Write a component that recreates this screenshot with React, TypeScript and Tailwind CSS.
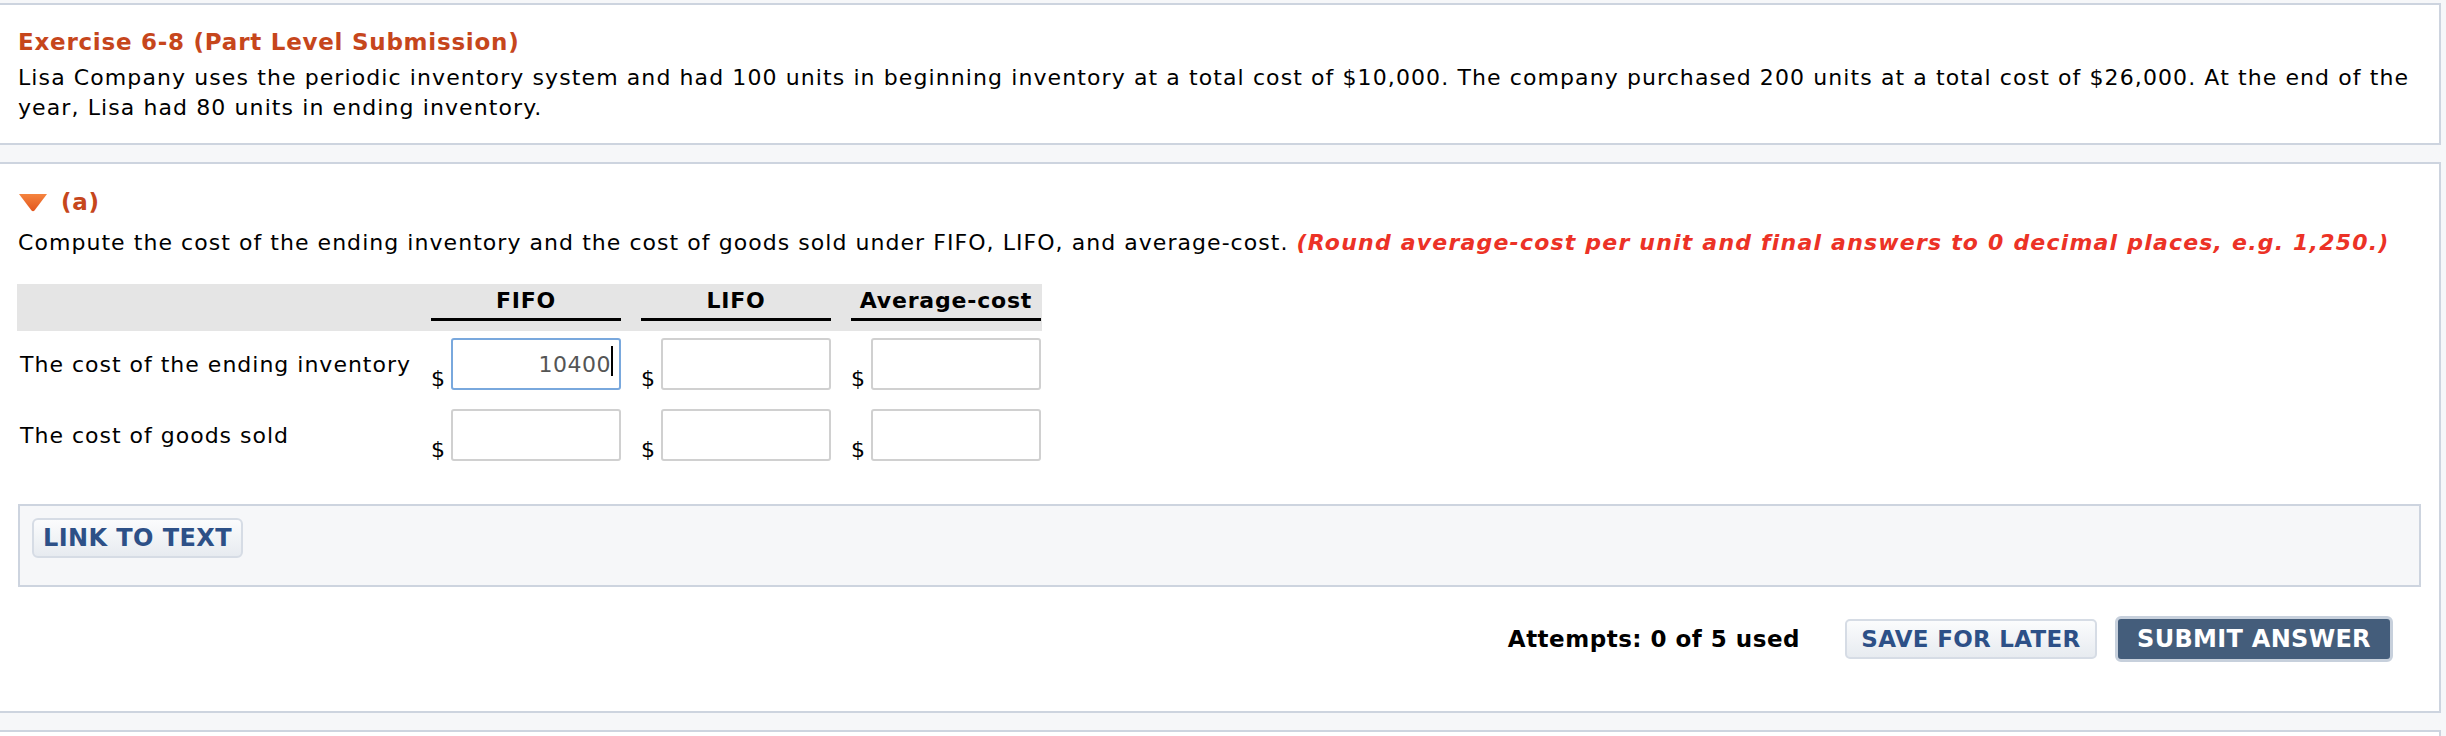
export default function App() {
  const rows = ["The cost of the ending inventory", "The cost of goods sold"];
  const cols = ["FIFO", "LIFO", "Average-cost"];

  return (
    <div className="h-[736px] overflow-hidden bg-[#f6f7f9] pt-[3px] font-['DejaVu_Sans',Verdana,sans-serif] text-[22px] tracking-[1px] text-black">
      {/* problem statement */}
      <div className="mr-[5px] h-[142px] border-y-2 border-r-2 border-[#cdd4df] bg-white pl-[18px] pt-[22px]">
        <h1 className="text-[23px] font-bold leading-[30px] tracking-[0.75px] text-[#c6461c]">
          Exercise 6-8 (Part Level Submission)
        </h1>
        <p className="mt-[6px] leading-[30px] tracking-[1.1px]">
          Lisa Company uses the periodic inventory system and had 100 units in beginning inventory at a total cost of
          $10,000. The company purchased 200 units at a total cost of $26,000. At the end of the year, Lisa had 80 units
          in ending inventory.
        </p>
      </div>

      {/* part (a) */}
      <div className="mr-[5px] mt-[17px] h-[551px] border-y-2 border-r-2 border-[#cdd4df] bg-white">
        <div className="flex items-center gap-[13px] pl-[18px] pt-[24px]">
          <svg width="30" height="20" viewBox="0 0 30 20">
            <defs>
              <linearGradient id="tri" x1="0" y1="0" x2="0" y2="1">
                <stop offset="0" stopColor="#f5843f" />
                <stop offset="1" stopColor="#e2561d" />
              </linearGradient>
            </defs>
            <path d="M1 2 H29 L16.5 18.5 Q15 20 13.5 18.5 Z" fill="url(#tri)" />
          </svg>
          <span className="text-[23px] font-bold leading-[28px] tracking-[0.7px] text-[#c6461c]">(a)</span>
        </div>
        <p className="mt-[12px] pl-[18px] leading-[30px] tracking-[1.05px]">
          Compute the cost of the ending inventory and the cost of goods sold under FIFO, LIFO, and average-cost.{" "}
          <span className="font-bold italic tracking-[1.2px] text-[#ec3226]">
            (Round average-cost per unit and final answers to 0 decimal places, e.g. 1,250.)
          </span>
        </p>

        {/* table */}
        <div className="ml-[17px] mt-[26px] w-[1025px]">
          <div className="grid grid-cols-[394px_190px_190px_190px] gap-x-[20px] bg-[#e5e5e5] pb-[10px] pt-[4px]">
            <div />
            {cols.map((c) => (
              <div key={c} className="border-b-[3px] border-black pb-[4px] text-center font-bold leading-[26px] tracking-[0.8px]">
                {c}
              </div>
            ))}
          </div>
          {rows.map((r, ri) => (
            <div
              key={r}
              className={`grid grid-cols-[394px_190px_190px_190px] gap-x-[20px] ${ri === 0 ? "mt-[7px]" : "mt-[19px]"}`}
            >
              <div className="pl-[3px] pt-[12px] leading-[30px]">{r}</div>
              {cols.map((c, ci) => {
                const focused = ri === 0 && ci === 0;
                return (
                  <div key={c} className="flex items-end">
                    <span className="w-[20px] leading-[22px] tracking-normal">$</span>
                    <div
                      className={`flex h-[52px] w-[170px] items-center justify-end rounded-[3px] border-2 bg-white pr-[8px] ${
                        focused ? "border-[#79a8dd]" : "border-[#d0d0d0]"
                      }`}
                    >
                      {focused && (
                        <span className="flex items-center text-[22px] tracking-[0.5px] text-[#555]">
                          1040
                          <span className="relative">
                            0<span className="absolute right-[-2px] top-[-2px] h-[30px] w-[2px] bg-black" />
                          </span>
                        </span>
                      )}
                    </div>
                  </div>
                );
              })}
            </div>
          ))}
        </div>

        {/* link to text */}
        <div className="ml-[18px] mr-[18px] mt-[43px] h-[83px] border-2 border-[#cdd4df] bg-[#f6f7f9] pl-[12px] pt-[12px]">
          <button className="h-[40px] w-[211px] rounded-[6px] border-2 border-[#d6dce5] bg-gradient-to-b from-[#fbfcfd] to-[#e7ebf0] text-[24px] font-bold leading-[36px] tracking-[0.4px] text-[#2d5087]">
            LINK TO TEXT
          </button>
        </div>

        {/* footer actions */}
        <div className="mr-[46px] mt-[29px] flex items-center justify-end">
          <span className="mr-[45px] text-[23px] font-bold tracking-[0.5px]">Attempts: 0 of 5 used</span>
          <button className="h-[40px] w-[252px] rounded-[5px] border-2 border-[#d6dce5] bg-gradient-to-b from-[#fbfcfd] to-[#e7ebf0] text-[23px] font-bold leading-[36px] tracking-[0.3px] text-[#2d5087]">
            SAVE FOR LATER
          </button>
          <button className="ml-[18px] h-[46px] w-[278px] rounded-[6px] border-[3px] border-[#c7d0dc] bg-[#445d7b] text-[24px] font-bold leading-[38px] tracking-[0.3px] text-white">
            SUBMIT ANSWER
          </button>
        </div>
      </div>

      <div className="mr-[5px] mt-[17px] h-[40px] border-r-2 border-t-2 border-[#cdd4df] bg-white" />
    </div>
  );
}
